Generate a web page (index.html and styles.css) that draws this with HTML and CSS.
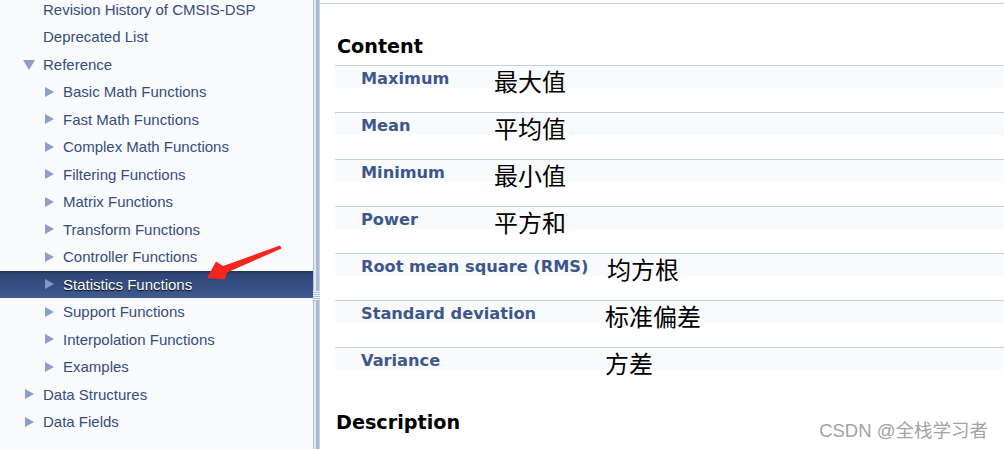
FILE: index.html
```html
<!DOCTYPE html>
<html lang="zh">
<head>
<meta charset="utf-8">
<link rel="stylesheet" href="styles.css">
</head>
<body>
<div class="page">
  <nav class="nav">
    <ul class="tree">
      <li class="item l1"><span class="tog"></span>Revision History of CMSIS-DSP</li>
      <li class="item l1"><span class="tog"></span>Deprecated List</li>
      <li class="item l1"><span class="tog down"></span>Reference</li>
      <li class="item l2"><span class="tog right"></span>Basic Math Functions</li>
      <li class="item l2"><span class="tog right"></span>Fast Math Functions</li>
      <li class="item l2"><span class="tog right"></span>Complex Math Functions</li>
      <li class="item l2"><span class="tog right"></span>Filtering Functions</li>
      <li class="item l2"><span class="tog right"></span>Matrix Functions</li>
      <li class="item l2"><span class="tog right"></span>Transform Functions</li>
      <li class="item l2"><span class="tog right"></span>Controller Functions</li>
      <li class="item l2 selected"><span class="tog right"></span>Statistics Functions</li>
      <li class="item l2"><span class="tog right"></span>Support Functions</li>
      <li class="item l2"><span class="tog right"></span>Interpolation Functions</li>
      <li class="item l2"><span class="tog right"></span>Examples</li>
      <li class="item l1"><span class="tog right"></span>Data Structures</li>
      <li class="item l1"><span class="tog right"></span>Data Fields</li>
    </ul>
  </nav>
  <div class="splitter"><div class="grip"></div></div>
  <main class="content">
    <div class="topbar"></div>
    <h2 class="heading">Content</h2>
    <div class="members">
      <div class="row"><span class="label">Maximum</span><span class="zh">最大值</span></div>
      <div class="row"><span class="label">Mean</span><span class="zh">平均值</span></div>
      <div class="row"><span class="label">Minimum</span><span class="zh">最小值</span></div>
      <div class="row"><span class="label">Power</span><span class="zh">平方和</span></div>
      <div class="row wide"><span class="label">Root mean square (RMS)</span><span class="zh rms">均方根</span></div>
      <div class="row wide"><span class="label">Standard deviation</span><span class="zh">标准偏差</span></div>
      <div class="row wide"><span class="label">Variance</span><span class="zh">方差</span></div>
    </div>
    <h2 class="heading desc">Description</h2>
  </main>
</div>
<svg class="arrow" width="1004" height="449" viewBox="0 0 1004 449">
  <polygon points="280,245.5 223,266 216,261.5 207,278 225,279.5 227,272.5 281.5,248.5" fill="#f5261c"/>
</svg>
<div class="watermark">CSDN @全栈学习者</div>
</body>
</html>
```
FILE: styles.css
```css
html, body {
  margin: 0;
  padding: 0;
  height: 100%;
  overflow: hidden;
  background: #ffffff;
}
.page {
  display: flex;
  height: 449px;
}
.nav {
  width: 313px;
  flex: none;
  background: #f9fafc;
  overflow: hidden;
}
.tree {
  list-style: none;
  margin: -4.5px 0 0 0;
  padding: 0;
}
.item {
  height: 27.5px;
  line-height: 27.5px;
  font-family: "Liberation Sans", Arial, sans-serif;
  font-size: 15px;
  color: #364d7c;
  display: flex;
  align-items: center;
  white-space: nowrap;
}
.l1 { padding-left: 23px; }
.l2 { padding-left: 43px; }
.tog {
  width: 20px;
  height: 12px;
  flex: none;
}
.tog.right::before {
  content: "";
  display: block;
  width: 0;
  height: 0;
  margin: 1px 0 0 2px;
  border-left: 9px solid #8c9fcb;
  border-top: 5px solid transparent;
  border-bottom: 5px solid transparent;
}
.tog.down::before {
  content: "";
  display: block;
  width: 0;
  height: 0;
  margin: 2px 0 0 0;
  border-top: 10px solid #8c9fcb;
  border-left: 6px solid transparent;
  border-right: 6px solid transparent;
}
.selected {
  background: linear-gradient(#22304f 0, #2f4577 3px, #3e5a8f 100%);
  color: #ffffff;
  text-shadow: 0 1px 1px #000000;
}
.selected .tog.right::before {
  border-left-color: #8496c2;
}
.splitter {
  width: 7px;
  flex: none;
  background: linear-gradient(90deg, #b6c2dc 0, #b6c2dc 1px, #e2e7f2 1px, #e2e7f2 3px, #aab8d7 3px, #aab8d7 6px, #c9d3e8 6px);
}
.grip {
  margin-top: 291px;
  height: 10px;
  background: repeating-linear-gradient(#eef1f7 0, #eef1f7 1px, #b2bfdb 1px, #b2bfdb 2px);
}
.content {
  flex: 1;
  padding-left: 15px;
  overflow: hidden;
}
.topbar {
  height: 3px;
  border-bottom: 1px solid #c4cfe5;
  margin-left: -15px;
}
.heading {
  margin: 0;
  padding: 32px 0 7px 2px;
  font-family: "DejaVu Sans", Verdana, sans-serif;
  font-weight: bold;
  font-size: 19.2px;
  line-height: 22px;
  color: #000000;
}
.heading.desc {
  padding-top: 18px;
  padding-left: 1px;
}
.members {
  display: flex;
  flex-direction: column;
}
.row {
  height: 46px;
  border-top: 1px solid #c4cfe5;
  background: linear-gradient(#f9fafc 0, #f9fafc 22px, #ffffff 22px);
  display: grid;
  grid-template-columns: 159px 1fr;
  align-items: start;
}
.row.wide {
  grid-template-columns: 270px 1fr;
}
.label {
  padding-left: 26px;
  font-family: "DejaVu Sans", Verdana, sans-serif;
  font-weight: bold;
  font-size: 16.2px;
  line-height: 26px;
  color: #3d578c;
  white-space: nowrap;
}
.zh {
  font-family: "Noto Sans CJK SC", sans-serif;
  font-size: 24px;
  line-height: 29px;
  color: #000000;
}
.zh.rms {
  padding-left: 2px;
}
.arrow {
  position: absolute;
  left: 0;
  top: 0;
  pointer-events: none;
}
.watermark {
  position: absolute;
  right: 16px;
  top: 419px;
  font-family: "Liberation Sans", "Noto Sans CJK SC", sans-serif;
  font-size: 18.5px;
  line-height: 24px;
  color: #a3a3a3;
  text-shadow: 0 0 1px #ffffff;
}
```
